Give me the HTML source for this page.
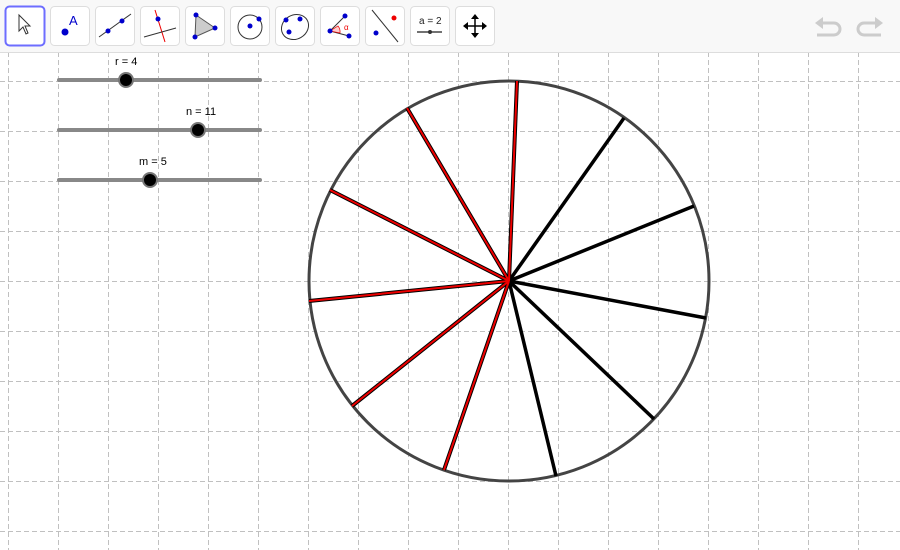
<!DOCTYPE html>
<html><head><meta charset="utf-8"><style>
body{margin:0;width:900px;height:550px;overflow:hidden;background:#fff;font-family:"Liberation Sans",sans-serif}
</style></head><body>
<svg width="900" height="550" xmlns="http://www.w3.org/2000/svg" style="position:absolute;left:0;top:0">
<g stroke="#c0c0c0" stroke-width="1" stroke-dasharray="5,3">
<line x1="8.5" y1="52" x2="8.5" y2="550"/><line x1="58.5" y1="52" x2="58.5" y2="550"/><line x1="108.5" y1="52" x2="108.5" y2="550"/><line x1="158.5" y1="52" x2="158.5" y2="550"/><line x1="208.5" y1="52" x2="208.5" y2="550"/><line x1="258.5" y1="52" x2="258.5" y2="550"/><line x1="308.5" y1="52" x2="308.5" y2="550"/><line x1="358.5" y1="52" x2="358.5" y2="550"/><line x1="408.5" y1="52" x2="408.5" y2="550"/><line x1="458.5" y1="52" x2="458.5" y2="550"/><line x1="508.5" y1="52" x2="508.5" y2="550"/><line x1="558.5" y1="52" x2="558.5" y2="550"/><line x1="608.5" y1="52" x2="608.5" y2="550"/><line x1="658.5" y1="52" x2="658.5" y2="550"/><line x1="708.5" y1="52" x2="708.5" y2="550"/><line x1="758.5" y1="52" x2="758.5" y2="550"/><line x1="808.5" y1="52" x2="808.5" y2="550"/><line x1="858.5" y1="52" x2="858.5" y2="550"/>
<line x1="0" y1="81.5" x2="900" y2="81.5"/><line x1="0" y1="131.5" x2="900" y2="131.5"/><line x1="0" y1="181.5" x2="900" y2="181.5"/><line x1="0" y1="231.5" x2="900" y2="231.5"/><line x1="0" y1="281.5" x2="900" y2="281.5"/><line x1="0" y1="331.5" x2="900" y2="331.5"/><line x1="0" y1="381.5" x2="900" y2="381.5"/><line x1="0" y1="431.5" x2="900" y2="431.5"/><line x1="0" y1="481.5" x2="900" y2="481.5"/><line x1="0" y1="531.5" x2="900" y2="531.5"/>
</g>
<!-- sliders -->
<g stroke="#888" stroke-width="4" stroke-linecap="round">
<line x1="59" y1="80" x2="260" y2="80"/><line x1="59" y1="130" x2="260" y2="130"/><line x1="59" y1="180" x2="260" y2="180"/>
</g>
<g fill="#000" stroke="#777" stroke-width="2">
<circle cx="126" cy="80" r="7"/><circle cx="198" cy="130" r="7"/><circle cx="150" cy="180" r="7"/>
</g>
<g font-size="11" fill="#000">
<text x="115" y="65">r = 4</text><text x="186" y="115">n = 11</text><text x="139" y="165">m = 5</text>
</g>
<!-- circle -->
<circle cx="509" cy="281" r="200" fill="none" stroke="#444" stroke-width="3"/>
<g stroke="#000" stroke-width="3.5">
<line x1="509" y1="281" x2="624" y2="118"/><line x1="509" y1="281" x2="694" y2="206"/><line x1="509" y1="281" x2="706" y2="318"/><line x1="509" y1="281" x2="654" y2="419"/><line x1="509" y1="281" x2="556" y2="476"/>
</g>
<g stroke="#000" stroke-width="4">
<line x1="509" y1="281" x2="517" y2="81"/><line x1="509" y1="281" x2="407" y2="108"/><line x1="509" y1="281" x2="330" y2="190"/><line x1="509" y1="281" x2="309" y2="301"/><line x1="509" y1="281" x2="352" y2="406"/><line x1="509" y1="281" x2="444" y2="470"/>
</g>
<g stroke="#e00" stroke-width="2">
<line x1="509" y1="281" x2="517" y2="81"/><line x1="509" y1="281" x2="407" y2="108"/><line x1="509" y1="281" x2="330" y2="190"/><line x1="509" y1="281" x2="309" y2="301"/><line x1="509" y1="281" x2="352" y2="406"/><line x1="509" y1="281" x2="444" y2="470"/>
</g>
<!-- toolbar -->
<rect x="0" y="0" width="900" height="52" fill="#f8f8f8"/>
<line x1="0" y1="52.5" x2="900" y2="52.5" stroke="#ddd"/>
<g fill="#fff" stroke="#ddd">
<rect x="5.5" y="6.5" width="39" height="39" rx="4" stroke="#6d6dff" stroke-width="2"/>
<rect x="50.5" y="6.5" width="39" height="39" rx="4"/><rect x="95.5" y="6.5" width="39" height="39" rx="4"/><rect x="140.5" y="6.5" width="39" height="39" rx="4"/><rect x="185.5" y="6.5" width="39" height="39" rx="4"/><rect x="230.5" y="6.5" width="39" height="39" rx="4"/><rect x="275.5" y="6.5" width="39" height="39" rx="4"/><rect x="320.5" y="6.5" width="39" height="39" rx="4"/><rect x="365.5" y="6.5" width="39" height="39" rx="4"/><rect x="410.5" y="6.5" width="39" height="39" rx="4"/><rect x="455.5" y="6.5" width="39" height="39" rx="4"/>
</g>
<path d="M19 15 L19 31 L23 27 L26 34 L28 33 L25 26 L30 26 Z" fill="#fff" stroke="#333" stroke-width="1"/>
<circle cx="65" cy="32" r="3.5" fill="#00c"/><text x="69" y="25" font-size="13" fill="#00c">A</text>
<line x1="99" y1="37" x2="131" y2="14" stroke="#333"/><circle cx="108" cy="31" r="2.5" fill="#00c"/><circle cx="122" cy="21" r="2.5" fill="#00c"/>
<line x1="155" y1="10" x2="165" y2="42" stroke="#e00"/><line x1="144" y1="37" x2="176" y2="28" stroke="#333"/><circle cx="158" cy="19" r="2.5" fill="#00c"/>
<path d="M196 15 L215 28 L195 37 Z" fill="#ccc" stroke="#555"/><circle cx="196" cy="15" r="2.5" fill="#00c"/><circle cx="215" cy="28" r="2.5" fill="#00c"/><circle cx="195" cy="37" r="2.5" fill="#00c"/>
<circle cx="250" cy="27" r="12" fill="none" stroke="#333"/><circle cx="250" cy="26" r="2.5" fill="#00c"/><circle cx="259" cy="19" r="2.5" fill="#00c"/>
<ellipse cx="295" cy="27" rx="14" ry="12" transform="rotate(-30 295 27)" fill="none" stroke="#333"/><circle cx="286" cy="20" r="2.5" fill="#00c"/><circle cx="300" cy="19" r="2.5" fill="#00c"/><circle cx="289" cy="32" r="2.5" fill="#00c"/>
<path d="M330 31 L345 16 M330 31 L349 36" stroke="#333"/><path d="M330 31 L338 26 A9 9 0 0 1 340 33 Z" fill="#fcc" stroke="#e00" stroke-width=".7"/><text x="344" y="30" font-size="8" fill="#e00">α</text><circle cx="330" cy="31" r="2.5" fill="#00c"/><circle cx="345" cy="16" r="2.5" fill="#00c"/><circle cx="349" cy="36" r="2.5" fill="#00c"/>
<line x1="372" y1="10" x2="398" y2="42" stroke="#333"/><circle cx="376" cy="33" r="2.5" fill="#00c"/><circle cx="394" cy="18" r="2.5" fill="#e00"/>
<text x="419" y="24" font-size="10" fill="#222">a = 2</text><line x1="417" y1="32" x2="442" y2="32" stroke="#444" stroke-width="1.5"/><circle cx="430" cy="32" r="2" fill="#333"/>
<path d="M465 26 H485 M475 16 V36" stroke="#000" stroke-width="1.5"/><path d="M475 14 L471 19 H479 Z M475 38 L471 33 H479 Z M463 26 L468 22 V30 Z M487 26 L482 22 V30 Z" fill="#000"/>
<g fill="none" stroke="#ccc" stroke-width="3">
<path d="M820 23 H834 A6 6 0 0 1 834 35 H817"/><path d="M878 23 H864 A6 6 0 0 0 864 35 H881"/>
</g>
<path d="M815 23 L823 17 V29 Z" fill="#ccc"/><path d="M883 23 L875 17 V29 Z" fill="#ccc"/>
</svg>
</body></html>
